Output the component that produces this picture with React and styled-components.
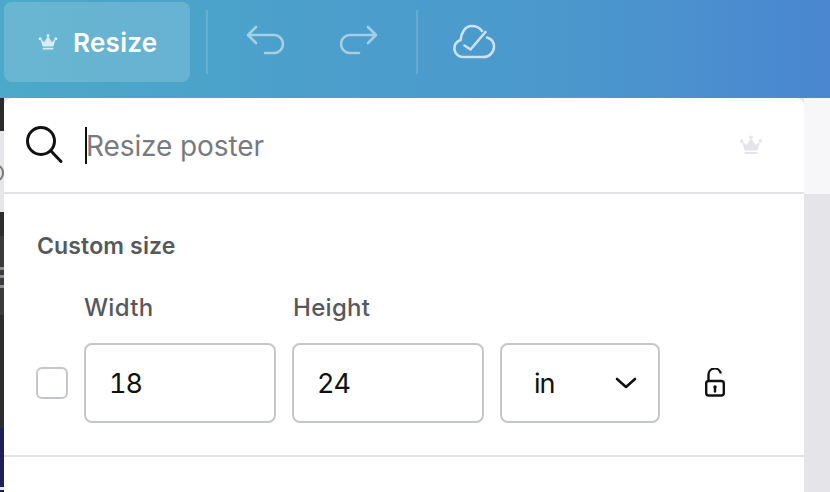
import React from "react";
import styled, { createGlobalStyle } from "styled-components";

const Global = createGlobalStyle`
  html, body { margin: 0; padding: 0; background: #e6e6ea; overflow: hidden; }
  * { box-sizing: border-box; }
`;
const Page = styled.div`
  width: 830px; height: 492px; overflow: hidden; display: flex; flex-direction: column;
  font-family: Inter, "Noto Sans", sans-serif;
`;
const TopBar = styled.header`
  height: 98px; flex: none; display: flex; align-items: flex-start; padding: 2px 0 0 4px;
  background: linear-gradient(90deg, #4ca9c9 0%, #4b9fcb 40%, #4b97cd 70%, #4a86d0 100%);
`;
const ResizeButton = styled.div`
  width: 186px; height: 80px; border-radius: 8px; background: rgba(255,255,255,.16);
  display: flex; align-items: center; padding-left: 34px; gap: 15px;
  color: #fff; font-size: 26px; font-weight: 600; letter-spacing: .3px;
`;
const Divider = styled.div`
  width: 2px; height: 64px; margin: 8px 0 0 ${p => p.$ml}px; background: rgba(255,255,255,.14); flex: none;
`;
const BarIcon = styled.div`
  width: ${p => p.$w}px; margin-left: ${p => p.$ml}px; height: 80px; flex: none;
  display: flex; align-items: center; justify-content: center; opacity: ${p => p.$o || 1};
`;
const Body = styled.div`
  flex: 1; display: flex; min-height: 0;
`;
const LeftStrip = styled.div`
  width: 4px; flex: none; display: flex; flex-direction: column; overflow: hidden;
`;
const Band = styled.div`
  height: ${p => p.$h}px; flex: none; background: ${p => p.$c};
`;
const GlyphBand = styled(Band)`
  display: flex; flex-direction: column; padding-top: 34px;
`;
const Panel = styled.section`
  width: 800px; flex: none; background: #fff; border-radius: 8px 8px 0 0;
`;
const RightStrip = styled.div`
  flex: 1; display: flex; flex-direction: column;
  box-shadow: inset 3px 0 3px -1px rgba(60,60,90,.09);
`;
const SearchRow = styled.div`
  height: 96px; display: flex; align-items: center; padding: 0 41px 0 22px;
  border-bottom: 2px solid #e2e2e7;
`;
const Caret = styled.span`
  width: 2px; height: 37px; background: #111; margin-left: 21px; flex: none;
`;
const Placeholder = styled.span`
  font-size: 28px; line-height: 36px; padding-top: 2px; color: #777b80; flex: 1;
  letter-spacing: -.1px; margin-left: -1px;
`;
const Section = styled.div`
  height: 263px; padding: 37px 0 0 33px; border-bottom: 2px solid #e2e2e7;
`;
const Heading = styled.div`
  font-size: 23px; font-weight: 600; color: #55595e; line-height: 30px; letter-spacing: .15px;
`;
const FieldGrid = styled.div`
  display: grid; grid-template-columns: 32px 192px 192px 160px auto; column-gap: 16px;
  margin-top: 32px; margin-left: -1px; align-items: center;
`;
const FieldLabel = styled.div`
  font-size: 24px; font-weight: 500; color: #55595e; line-height: 30px; grid-row: 1;
  grid-column: ${p => p.$col}; letter-spacing: .3px; padding-left: ${p => p.$pl || 0}px;
`;
const Checkbox = styled.div`
  width: 32px; height: 32px; margin-top: 20px; border: 2px solid #c3c6ca; border-radius: 6px; grid-row: 2;
`;
const Field = styled.div`
  height: 80px; margin-top: 20px; border: 2px solid #c3c6ca; border-radius: 8px; grid-row: 2;
  display: flex; align-items: center; justify-content: space-between;
  padding: 0 ${p => p.$pr || 22}px 0 ${p => p.$pl || 23}px;
  font-size: 27px; font-variant-numeric: tabular-nums; letter-spacing: -1px; color: #111;
`;
const LockWrap = styled.div`
  grid-row: 2; margin-left: 29px; margin-top: 20px; display: flex; align-items: center;
`;

const Crown = ({ color, size = 24 }) => (
  <svg width={size} height={size} viewBox="0 0 24 24" fill={color}>
    <circle cx="12" cy="4.200" r="1.800" /><circle cx="2.600" cy="8" r="1.800" /><circle cx="21.400" cy="8" r="1.800" />
    <path d="M3 8.500 7.500 12 12 5l4.500 7L21 8.500 18.500 17.500H5.500Z" />
    <rect x="5.500" y="19" width="13" height="2" rx=".5" />
  </svg>
);

export default function App() {
  return (
    <Page>
      <Global />
      <TopBar>
        <ResizeButton>
          <Crown color="#d8eef5" size={20} />
          <span>Resize</span>
        </ResizeButton>
        <Divider $ml={16} />
        <BarIcon $w={40} $ml={38} $o={0.5}>
          <svg width="40" height="34" viewBox="0 0 40 34" fill="none" stroke="#fff" strokeWidth="2.600" strokeLinecap="round" strokeLinejoin="round">
            <path d="M10 2 2 10l8 8M2 10h26a8.500 8.500 0 0 1 0 18h-9" />
          </svg>
        </BarIcon>
        <BarIcon $w={40} $ml={54} $o={0.5}>
          <svg width="40" height="34" viewBox="0 0 40 34" fill="none" stroke="#fff" strokeWidth="2.600" strokeLinecap="round" strokeLinejoin="round">
            <path d="M28 2l8 8-8 8M36 10H10a8.500 8.500 0 0 0 0 18h9" />
          </svg>
        </BarIcon>
        <Divider $ml={36} />
        <BarIcon $w={44} $ml={34} $o={0.72}>
          <svg width="44" height="36" viewBox="0 0 44 36" fill="none" stroke="#fff" strokeWidth="2.600" strokeLinecap="round" strokeLinejoin="round">
            <path d="M32 33H10.500a8.700 8.700 0 0 1-2-17C9.500 8 13.500 2 19.500 2c4.500 0 8.500 2 10.500 5" />
            <path d="M35 13.500c4 1.200 7 4.500 7 9 0 6-5 10.500-10 10.500" />
            <path d="M12.500 21.500l6 4L33.500 8" />
          </svg>
        </BarIcon>
      </TopBar>
      <Body>
        <LeftStrip>
          <Band $h={33} $c="#2a2b2d" />
          <GlyphBand $h={81} $c="#e6e6ea">
            <svg width="4" height="16" viewBox="0 0 4 16" fill="none" stroke="#77787c" strokeWidth="2">
              <path d="M-3 1c3 0 6 2 6 7s-3 7-6 7" />
            </svg>
          </GlyphBand>
          <Band $h={24} $c="#2b2c2e" />
          <Band $h={31} $c="#3a3b3e" />
          <Band $h={3} $c="#8d8e90" />
          <Band $h={5} $c="#3a3b3e" />
          <Band $h={3} $c="#8d8e90" />
          <Band $h={7} $c="#3a3b3e" />
          <Band $h={3} $c="#8d8e90" />
          <Band $h={27} $c="#3a3b3e" />
          <Band $h={113} $c="#2b2c2e" />
          <Band $h={59} $c="#1c2058" />
          <Band $h={3} $c="#e8e8ee" />
          <Band $h={3} $c="#1c2058" />
        </LeftStrip>
        <Panel>
          <SearchRow>
            <svg width="38" height="38" viewBox="0 0 38 38" fill="none" stroke="#111" strokeWidth="3" strokeLinecap="round">
              <circle cx="15" cy="15" r="13.500" />
              <path d="M25 25l10 10.500" />
            </svg>
            <Caret />
            <Placeholder>Resize poster</Placeholder>
            <Crown color="#e4e5e9" size={24} />
          </SearchRow>
          <Section>
            <Heading>Custom size</Heading>
            <FieldGrid>
              <FieldLabel $col={2}>Width</FieldLabel>
              <FieldLabel $col={3} $pl={1}>Height</FieldLabel>
              <Checkbox />
              <Field>18</Field>
              <Field>24</Field>
              <Field $pl={32} $pr={21}>
                in
                <svg width="22" height="14" viewBox="0 0 22 14" fill="none" stroke="#111" strokeWidth="2.600" strokeLinecap="round" strokeLinejoin="round">
                  <path d="M2 3l9 8 9-8" />
                </svg>
              </Field>
              <LockWrap>
                <svg width="20" height="30" viewBox="0 0 20 30" fill="none" stroke="#111" strokeWidth="2.400" strokeLinecap="round">
                  <path d="M3.500 12V7a6.200 6.200 0 0 1 12-2.500" />
                  <rect x="1.200" y="13" width="17.600" height="14.500" rx="2.500" />
                  <path d="M10 19v4.500" />
                  <circle cx="10" cy="19" r="1.700" fill="#111" stroke="none" />
                </svg>
              </LockWrap>
            </FieldGrid>
          </Section>
        </Panel>
        <RightStrip>
          <Band $h={96} $c="#f7f7f9" />
          <Band $h={298} $c="#e4e4e9" />
        </RightStrip>
      </Body>
    </Page>
  );
}
